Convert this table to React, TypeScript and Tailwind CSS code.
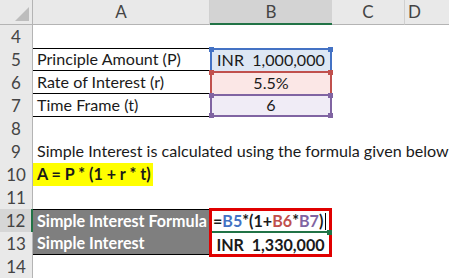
const font = { fontFamily: "Lato, 'Liberation Sans', sans-serif" };

const rowNums = [4, 5, 6, 7, 8, 9, 10, 11, 12, 13, 14];

const Handle = ({ pos, color }: { pos: string; color: string }) => (
  <span className={`absolute w-[5px] h-[5px] ${pos} ${color}`} />
);

const App = () => {
  return (
    <div
      className="w-[449px] h-[278px] overflow-hidden bg-white text-[16.1px] text-[#1a1a1a] grid grid-cols-[33px_177px_122px_73px_1fr] grid-rows-[25px_repeat(11,23px)]"
      style={font}
    >
      {/* column headers */}
      <div className="col-start-1 row-start-1 bg-[#e9e9e9] border-b border-r border-[#b4b4b4] relative">
        <svg className="absolute right-[3px] bottom-[3px]" width="14" height="14" viewBox="0 0 14 14">
          <polygon points="14,0 14,14 0,14" fill="#bdbdbd" />
        </svg>
      </div>
      <div className="col-start-2 row-start-1 bg-[#e9e9e9] border-b border-r border-[#b4b4b4] border-r-[#d0d0d0] flex items-center justify-center text-[#444] text-[17px]">
        A
      </div>
      <div className="col-start-3 row-start-1 bg-[#d3d3d3] border-b-2 border-[#217346] flex items-center justify-center text-[#444] text-[17px]">
        B
      </div>
      <div className="col-start-4 row-start-1 bg-[#e9e9e9] border-b border-r border-[#b4b4b4] border-r-[#d0d0d0] flex items-center justify-center text-[#444] text-[17px]">
        C
      </div>
      <div className="col-start-5 row-start-1 bg-[#e9e9e9] border-b border-[#b4b4b4] flex items-center pl-[3px] text-[#444] text-[17px]">
        D
      </div>

      {/* row headers */}
      {rowNums.map((n, i) => (
        <div
          key={n}
          className={
            n === 12
              ? "col-start-1 bg-[#d6d6d6] border-r-2 border-[#217346] flex items-center justify-center text-[#444] text-[17px]"
              : "col-start-1 bg-[#e9e9e9] border-r border-[#b4b4b4] flex items-center justify-center text-[#444] text-[17px]"
          }
          style={{ gridRowStart: i + 2 }}
        >
          {n}
        </div>
      ))}

      {/* inputs */}
      <div className="col-start-2 row-start-3 border-y border-black flex items-center pl-1">Principle Amount (P)</div>
      <div className="col-start-2 row-start-4 border-b border-black flex items-center pl-1">Rate of Interest (r)</div>
      <div className="col-start-2 row-start-5 border-b border-black flex items-center pl-1">Time Frame (t)</div>

      <div className="col-start-3 row-start-3 relative bg-[#dde7f4] border-x-2 border-t-2 border-[#4472c4] flex items-center justify-center whitespace-pre">
        INR  1,000,000
        <Handle pos="-left-[3px] -top-[3px]" color="bg-[#4472c4]" />
        <Handle pos="-right-[3px] -top-[3px]" color="bg-[#4472c4]" />
      </div>
      <div className="col-start-3 row-start-4 relative bg-[#fbe7e6] border-x-2 border-t-2 border-[#c0504d] flex items-center justify-center">
        5.5%
        <Handle pos="-left-[3px] -top-[3px]" color="bg-[#c0504d]" />
        <Handle pos="-right-[3px] -top-[3px]" color="bg-[#c0504d]" />
      </div>
      <div className="col-start-3 row-start-5 relative bg-[#f0ecf6] border-2 border-[#8064a2] flex items-center justify-center">
        6
        <Handle pos="-left-[3px] -top-[3px]" color="bg-[#8064a2]" />
        <Handle pos="-right-[3px] -top-[3px]" color="bg-[#8064a2]" />
        <Handle pos="-left-[3px] -bottom-[3px]" color="bg-[#8064a2]" />
        <Handle pos="-right-[3px] -bottom-[3px]" color="bg-[#8064a2]" />
      </div>

      {/* description */}
      <div className="col-start-2 col-span-4 row-start-7 flex items-center pl-1 whitespace-nowrap">
        Simple Interest is calculated using the formula given below
      </div>
      <div className="col-start-2 row-start-8 flex items-stretch">
        <span className="bg-[#ffff00] font-bold flex items-center pl-1 pr-[2px]">A = P * (1 + r * t)</span>
      </div>

      {/* result */}
      <div className="col-start-2 row-start-10 bg-[#7f7f7f] border-t border-black text-white font-bold flex items-center pl-1 whitespace-nowrap">
        Simple Interest Formula
      </div>
      <div className="col-start-2 row-start-11 bg-[#7f7f7f] border-b border-black text-white font-bold flex items-center pl-1">
        Simple Interest
      </div>
      <div className="col-start-3 row-start-10 row-span-2 -ml-px -mt-px -mb-[2px] border-[3px] border-[#e00000] flex flex-col font-bold">
        <div className="h-[22px] relative border-b-2 border-[#217346] flex items-center pl-[1px]">
          <span>=</span>
          <span className="text-[#4472c4]">B5</span>
          <span>*(1+</span>
          <span className="text-[#c0504d]">B6</span>
          <span>*</span>
          <span className="text-[#8064a2]">B7</span>
          <span>)</span>
          <span className="ml-[2px] w-px h-[17px] bg-black" />
          <span className="absolute -right-[3px] -bottom-[4px] w-[5px] h-[5px] bg-[#217346]" />
        </div>
        <div className="flex-1 flex items-center justify-center whitespace-pre">INR  1,330,000</div>
      </div>
    </div>
  );
};

export default App;
